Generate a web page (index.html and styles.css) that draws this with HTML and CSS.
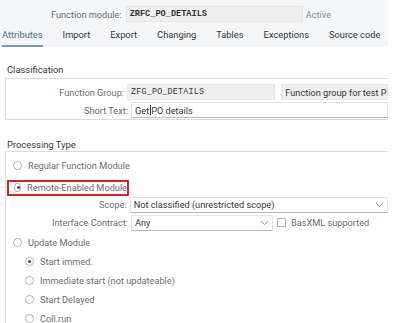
FILE: index.html
```html
<!DOCTYPE html>
<html lang="en">
<head>
    <meta charset="UTF-8">
    <title>Function Builder - ZRFC_PO_DETAILS</title>
    <link rel="stylesheet" href="styles.css">
</head>
<body>
    <div class="page">
        <div class="header">
            <div class="fm-row">
                <span class="label">Function module:</span>
                <span class="field field-ro mono strong fm-name">ZRFC_PO_DETAILS</span>
                <span class="status">Active</span>
            </div>
            <div class="tabs">
                <span class="tab active">Attributes</span>
                <span class="tab">Import</span>
                <span class="tab">Export</span>
                <span class="tab">Changing</span>
                <span class="tab">Tables</span>
                <span class="tab">Exceptions</span>
                <span class="tab">Source code</span>
            </div>
        </div>

        <div class="section-title title-class">Classification</div>
        <div class="panel panel-class">
            <div class="row">
                <span class="row-label">Function Group:</span>
                <span class="field field-ro mono fg-name">ZFG_PO_DETAILS</span>
                <span class="field field-ro fg-text">Function group for test PO</span>
            </div>
            <div class="row">
                <span class="row-label">Short Text:</span>
                <span class="field field-edit short-text">Get <span class="caret"></span>PO details</span>
            </div>
        </div>

        <div class="section-title title-proc">Processing Type</div>
        <div class="panel panel-proc">
            <div class="radio-row">
                <span class="radio"></span>
                <span class="radio-text">Regular Function Module</span>
            </div>
            <div class="radio-row highlight">
                <span class="radio checked"></span>
                <span class="radio-text">Remote-Enabled Module</span>
            </div>
            <div class="row row-sub">
                <span class="row-label">Scope:</span>
                <span class="field field-edit select scope">Not classified (unrestricted scope)
                    <svg class="chevron" width="9" height="6" viewBox="0 0 9 6"><path d="M1 1.2 L4.5 4.6 L8 1.2" fill="none" stroke="#8a8e92" stroke-width="1"/></svg>
                </span>
            </div>
            <div class="row row-sub">
                <span class="row-label">Interface Contract:</span>
                <span class="field field-edit select contract">Any
                    <svg class="chevron" width="9" height="6" viewBox="0 0 9 6"><path d="M1 1.2 L4.5 4.6 L8 1.2" fill="none" stroke="#8a8e92" stroke-width="1"/></svg>
                </span>
                <span class="checkbox"></span>
                <span class="check-text">BasXML supported</span>
            </div>
            <div class="radio-row update">
                <span class="radio"></span>
                <span class="radio-text">Update Module</span>
            </div>
            <div class="radio-row indent">
                <span class="radio checked"></span>
                <span class="radio-text">Start immed.</span>
            </div>
            <div class="radio-row indent">
                <span class="radio"></span>
                <span class="radio-text">Immediate start (not updateable)</span>
            </div>
            <div class="radio-row indent">
                <span class="radio"></span>
                <span class="radio-text">Start Delayed</span>
            </div>
            <div class="radio-row indent">
                <span class="radio"></span>
                <span class="radio-text">Coll.run</span>
            </div>
        </div>
    </div>
</body>
</html>
```

FILE: styles.css
```css
:root {
    --text-color: #32363a;
    --label-color: #6a6d70;
    --border-color: #d9dadb;
    --readonly-bg: #efefef;
    --header-bg: #f4f6f8;
}

* {
    box-sizing: border-box;
    margin: 0;
    padding: 0;
}

body {
    background: #fff;
    font-family: Roboto, 'Liberation Sans', sans-serif;
    font-size: 9.2px;
    color: var(--text-color);
    white-space: nowrap;
    overflow: hidden;
}

.page {
    width: 388px;
    height: 323px;
    overflow: hidden;
}

.mono {
    font-family: 'Liberation Mono', 'DejaVu Sans Mono', monospace;
    font-size: 8.6px;
}

.strong {
    font-weight: bold;
}

/* header */
.header {
    background: var(--header-bg);
    height: 47px;
}

.fm-row {
    display: flex;
    align-items: center;
    padding: 6px 0 0 51px;
    height: 22px;
}

.fm-row .label {
    flex: none;
    color: var(--label-color);
    margin-right: 4px;
}

.fm-name {
    width: 177px;
    height: 16px;
}

.status {
    color: #8a8d90;
    margin-left: 3px;
}

.tabs {
    display: flex;
    gap: 20px;
    padding: 7px 0 0 2px;
}

.tab {
    font-size: 9.3px;
    color: var(--text-color);
    padding-bottom: 5px;
    border-bottom: 2px solid transparent;
}

.tab.active {
    color: #4d6a86;
    border-bottom-color: #7f98b2;
}

/* fields */
.field {
    display: flex;
    align-items: center;
    padding: 0 3px;
    overflow: hidden;
}

.field-ro {
    background: var(--readonly-bg);
    border: 1px solid #e6e6e6;
}

.field-edit {
    background: #fff;
    border: 1px solid #e1e2e3;
    border-bottom-color: #b8bcc0;
}

/* sections */
.section-title {
    font-size: 9.4px;
    color: var(--text-color);
    padding-left: 7px;
}

.title-class {
    margin-top: 17px;
}

.title-proc {
    margin-top: 19px;
}

.panel {
    margin-left: 5px;
    border-top: 1px solid var(--border-color);
    border-left: 1px solid var(--border-color);
}

.panel-class {
    margin-top: 3px;
    padding: 4px 0 0;
    border-bottom: 1px solid var(--border-color);
}

.panel-proc {
    margin-top: 1px;
    padding-top: 4px;
}

.row {
    display: flex;
    align-items: center;
    height: 18px;
}

.row-label {
    width: 122px;
    text-align: right;
    color: var(--label-color);
    margin-right: 3px;
}

.row .field {
    height: 16px;
}

.fg-name {
    width: 153px;
    font-size: 8.4px;
    letter-spacing: 0.2px;
}

.fg-text {
    width: 110px;
    margin-left: 6px;
}

.short-text {
    flex: 1;
}

.caret {
    display: inline-block;
    width: 1px;
    height: 10px;
    background: #32363a;
    margin: 0 0 0 1px;
}

/* processing type */
.radio-row {
    display: flex;
    align-items: center;
    height: 19px;
    padding-left: 7px;
}

.radio-row.indent {
    padding-left: 19px;
}

.radio-row.update {
    margin-top: 1.5px;
}

.radio-row.highlight {
    width: 122px;
    height: 16px;
    margin: 4.5px 0 0 1px;
    padding-left: 5px;
    border: 2px solid #d5222b;
}

.radio {
    width: 9px;
    height: 9px;
    border: 1px solid #b0b4b8;
    border-radius: 50%;
    background: #fff;
    margin-right: 6px;
    position: relative;
}

.radio.checked::after {
    content: '';
    position: absolute;
    left: 2px;
    top: 2px;
    width: 3px;
    height: 3px;
    border-radius: 50%;
    background: #3d4d60;
}

.radio-text {
    color: var(--label-color);
}

.select {
    justify-content: space-between;
}

.scope {
    width: 261px;
}

.contract {
    width: 142px;
}

.chevron {
    flex: none;
}

.checkbox {
    width: 9px;
    height: 9px;
    border: 1px solid #b4b8bc;
    margin: 0 5px 0 4px;
}

.check-text {
    color: var(--label-color);
}
```
